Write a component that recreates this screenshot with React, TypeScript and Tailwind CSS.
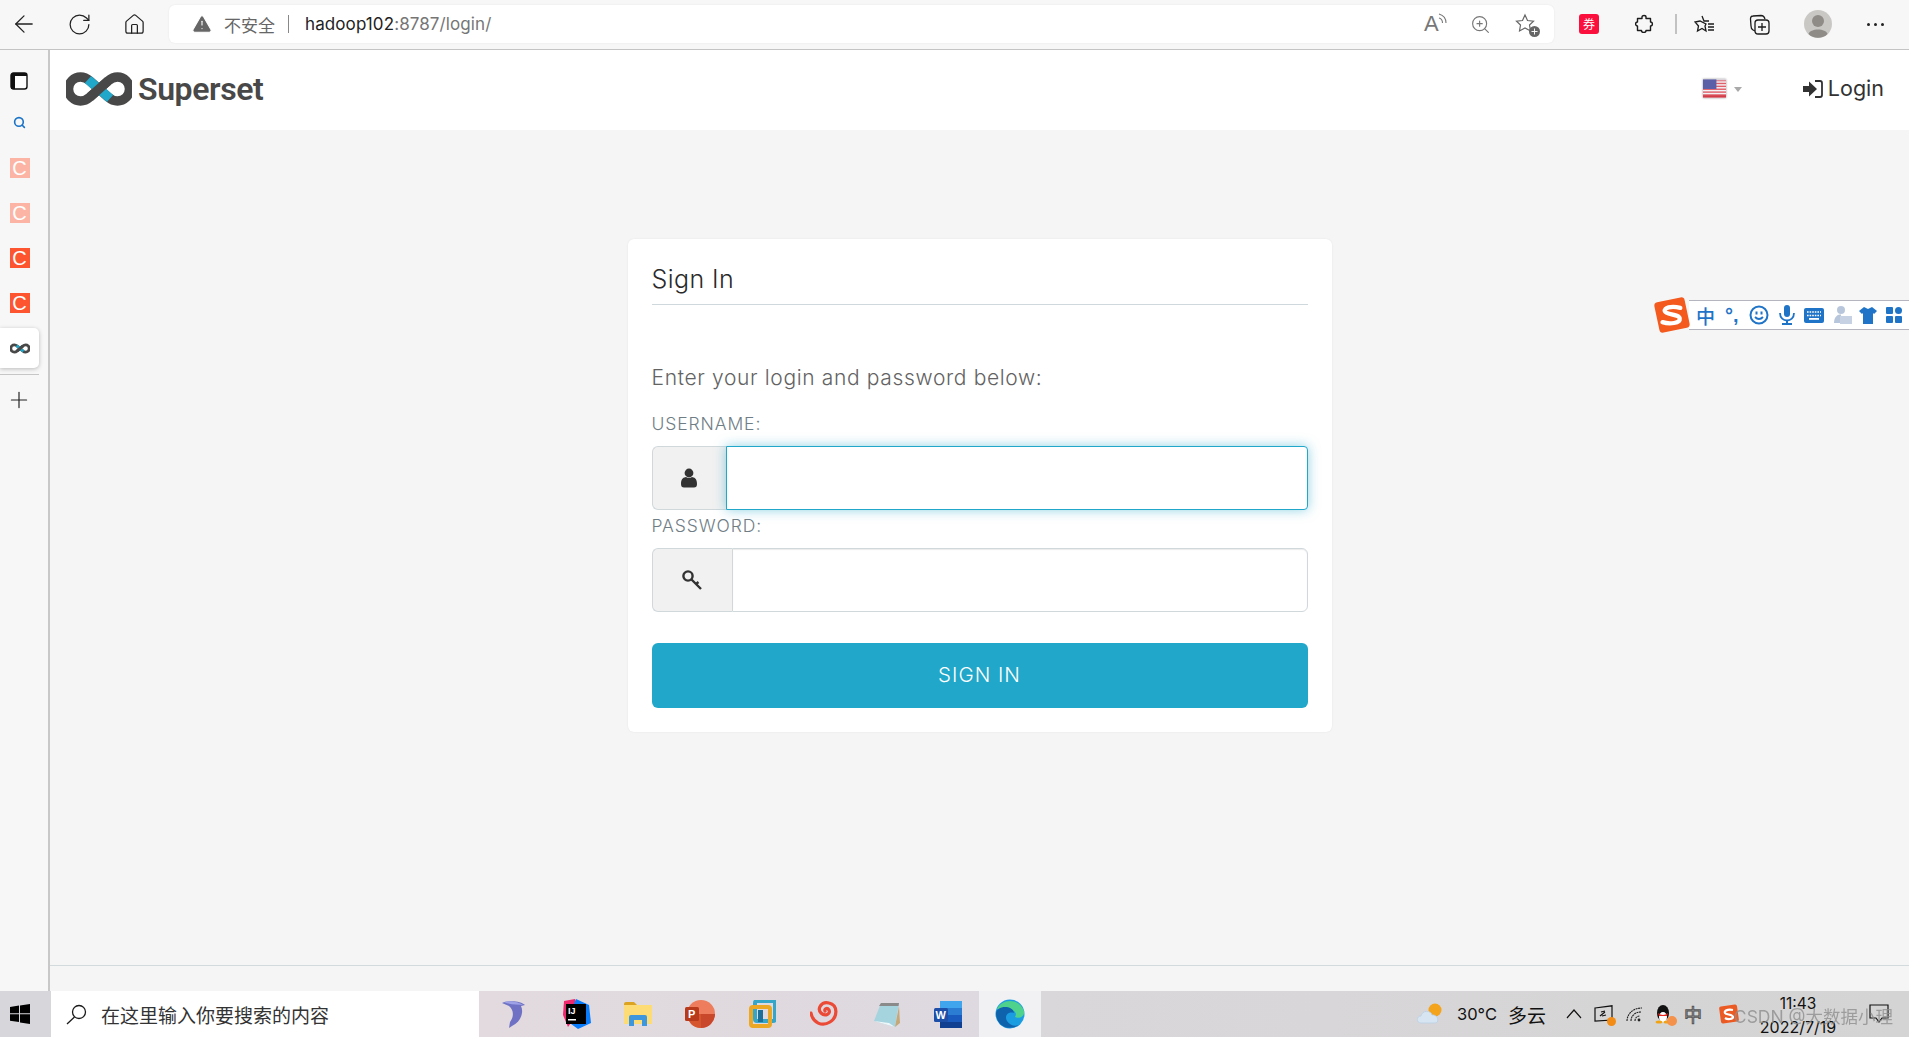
import React from "react";
import { ArrowLeft, RotateCw, Home, TriangleAlert, ZoomIn, Plus, Search } from "lucide-react";

const inter = "font-['Inter','Noto_Sans_CJK_SC',sans-serif]";
const cjk = "font-['Noto_Sans_CJK_SC','Liberation_Sans',sans-serif]";

function Logo({ w = 66, h = 34 }: { w?: number; h?: number }) {
  return (
    <svg width={w} height={h} viewBox="0 0 66 34" fill="none">
      <path d="M33 17 L24 9 C20 5.5 17 5 14.5 5 A12 12 0 0 0 14.5 29 C17 29 20 28.5 24 25 L42 9 C46 5.5 49 5 51.5 5 A12 12 0 0 1 51.5 29 C49 29 46 28.5 42 25 Z" stroke="#484848" strokeWidth="9.5" />
      <path d="M22 7.5 L31 15.5 M35 18.5 L44 26.5" stroke="#20a7c9" strokeWidth="9.5" />
      <path d="M24 25 L42 9" stroke="#484848" strokeWidth="9.5" />
    </svg>
  );
}

function CTile({ faded }: { faded?: boolean }) {
  return (
    <div className={`w-5 h-5 flex items-center justify-center text-white text-[20px] leading-none font-['Liberation_Sans',sans-serif] ${faded ? "bg-[#fcb5a5]" : "bg-[#fc5530]"}`}>C</div>
  );
}

function Flag() {
  return (
    <svg width="23" height="19" viewBox="0 0 24 19" className="drop-shadow-[0_0_1px_rgba(0,0,0,0.4)]">
      <rect width="24" height="19" fill="#f3f3f6" />
      {[0, 3, 6, 9, 12, 15].map((y) => (<rect key={y} y={y + 0.5} width="24" height="1.5" fill="#e0606a" />))}
      <rect width="24" height="1" fill="#d8d8e0" />
      <rect y="16.5" width="24" height="2.5" fill="#d33c48" />
      <rect width="14" height="10" fill="#5b5fa8" />
    </svg>
  );
}

function PuzzleIcon() {
  return (
    <svg width="20" height="20" viewBox="0 0 20 20" fill="none" stroke="#1c1c1c" strokeWidth="1.4" strokeLinejoin="round">
      <path d="M8 3 C8 1 12 1 12 3 L12 4.5 L16.5 4.5 L16.5 8 C19 8 19 12 16.5 12 L16.5 16.5 L12 16.5 C12 19 7.5 19 7.5 16.5 L3.5 16.5 L3.5 12 C1 12 1 8 3.5 8 L3.5 4.5 L8 4.5 Z" />
    </svg>
  );
}

function SogouS({ size = 32 }: { size?: number }) {
  return (
    <svg width={size} height={size} viewBox="0 0 32 32">
      <rect x="3" y="3" width="26" height="26" rx="3" fill="#f4591e" transform="rotate(-12 16 16)" />
      <path d="M23 10 C15 8 9 10 10 13 C11 16 22 15 22.5 19 C23 23 14 24 8 22" fill="none" stroke="#fff" strokeWidth="3.6" strokeLinecap="round" />
    </svg>
  );
}

function ImeBar() {
  const c = "#1f74c8";
  return (
    <div className="absolute right-0 top-[298px] h-[34px] flex items-center">
      <div className="relative z-10 -mr-[2px]"><SogouS size={38} /></div>
      <div className="h-[30px] bg-white border-y border-[#b5b5c0] flex items-center pl-[7px] w-[220px]">
        <span className={`text-[19px] font-medium leading-none text-[#1f74c8] w-[20px] ${cjk}`}>中</span>
        <span className="ml-[9px] w-[20px] text-[20px] font-bold leading-none text-[#1f74c8] font-['Liberation_Sans',sans-serif]">°,</span>
        <svg className="ml-[4px]" width="20" height="20" viewBox="0 0 20 20" fill="none" stroke={c} strokeWidth="2"><circle cx="10" cy="10" r="8.5" /><path d="M6 12 Q10 16 14 12" /><path d="M7.5 6.5v3M12.5 6.5v3" /></svg>
        <svg className="ml-[10px]" width="16" height="20" viewBox="0 0 16 20" fill={c}><rect x="5" y="0" width="6" height="12" rx="3" /><path d="M1 8 C1 18 15 18 15 8" fill="none" stroke={c} strokeWidth="1.8" /><rect x="7" y="15" width="2" height="3" /><rect x="3" y="18" width="10" height="2" /></svg>
        <svg className="ml-[9px]" width="20" height="15" viewBox="0 0 20 15" fill={c}><rect width="20" height="15" rx="2" /><path d="M3 4h14M3 7.5h14" stroke="#fff" strokeWidth="1.6" strokeDasharray="1.6 1" /><rect x="5" y="10" width="10" height="1.8" fill="#fff" /></svg>
        <svg className="ml-[8px]" width="20" height="20" viewBox="0 0 20 20" fill="#b8c6dc"><circle cx="9" cy="5" r="4" /><path d="M2 18 C2 11 6 9.5 9 9.5 L9 18 Z" /><rect x="8" y="11" width="12" height="8" fill="#c6d2e4" /></svg>
        <svg className="ml-[7px]" width="18" height="18" viewBox="0 0 18 18" fill={c}><path d="M5 1 L9 3 L13 1 L18 5 L15 8 L14 7 L14 18 L4 18 L4 7 L3 8 L0 5 Z" /></svg>
        <svg className="ml-[9px]" width="16" height="16" viewBox="0 0 16 16" fill={c}><rect width="7" height="7" rx="1" /><rect x="9" width="7" height="7" rx="3.5" /><rect y="9" width="7" height="7" rx="1" /><rect x="9" y="9" width="7" height="7" rx="1" /></svg>
      </div>
    </div>
  );
}

function BrowserBar() {
  return (
    <div className="h-[50px] shrink-0 flex items-center bg-[#f7f7f7] border-b border-[#c4c4c4] pb-[1px]">
      <div className="w-[169px] shrink-0 flex items-center pl-[10px] text-[#222]">
        <ArrowLeft size={28} strokeWidth={1.1} />
        <RotateCw className="ml-[29px]" size={25} strokeWidth={1.2} />
        <Home className="ml-[31px]" size={23} strokeWidth={1.3} />
      </div>
      <div className="w-[1385px] h-[38px] bg-white rounded-[6px] shadow-[0_0_2px_rgba(0,0,0,0.08)] flex items-center pl-[22px] pr-[17px]">
        <TriangleAlert size={22} fill="#666" stroke="#fff" strokeWidth={1.2} />
        <span className={`ml-[11px] text-[17px] text-[#666] leading-none ${cjk}`}>不安全</span>
        <span className="mx-[13px] w-[1px] h-[18px] bg-[#888]" />
        <span className={`ml-[3px] mt-[2px] text-[17px] tracking-[0.1px] text-[#222] ${inter}`}>hadoop102<span className="text-[#767676]">:8787/login/</span></span>
        <div className="ml-auto flex items-center gap-[24px] text-[#777]">
          <span className="relative w-[22px] h-[22px] text-[22px] leading-none font-['Liberation_Sans',sans-serif] font-light">A
            <svg className="absolute -right-[2px] top-0" width="10" height="12" viewBox="0 0 10 12" fill="none" stroke="#777" strokeWidth="1.1"><path d="M1 1 Q8 3 8 10M1 5 Q4.5 6 4.5 10" /></svg>
          </span>
          <ZoomIn size={21} strokeWidth={1.3} />
          <span className="relative w-[22px] h-[22px]">
            <svg width="22" height="22" viewBox="0 0 22 22" fill="none" stroke="#666" strokeWidth="1.2"><path d="M10 2 L12.5 7.5 L18.5 8.2 L14.5 12 L15.5 18 L10 15 L4.5 18 L5.5 12 L1.5 8.2 L7.5 7.5 Z" /></svg>
            <span className="absolute right-[-3px] bottom-[-2px] w-[11px] h-[11px] rounded-full bg-[#666] flex items-center justify-center"><Plus size={9} color="#fff" strokeWidth={2.5} /></span>
          </span>
        </div>
      </div>
      <div className="flex-1 relative flex items-center pl-[25px] text-[#1c1c1c]">
        <div className={`w-5 h-5 rounded-[3px] bg-[#fb0f3c] text-white text-[12px] leading-none flex items-center justify-center ${cjk}`}>券</div>
        <div className="ml-[35px]"><PuzzleIcon /></div>
        <span className="ml-[21px] w-[2px] h-[20px] bg-[#c2c2c2]" />
        <svg className="ml-[17px]" width="21" height="20" viewBox="0 0 21 20" fill="none" stroke="#1c1c1c" strokeWidth="1.3"><path d="M8 2 L10 7 L15 7 M12 10 L11 12 L12 17 L8 14.5 L3.5 17 L4.5 12 L1 8 L6 7 Z" /><path d="M14 10h6M14 13h6M14 16h6" /></svg>
        <svg className="ml-[34px]" width="21" height="21" viewBox="0 0 21 21" fill="none" stroke="#1c1c1c" strokeWidth="1.3"><path d="M6 17 L4 16 Q2 15 2 12 L1.5 5 Q1.5 2 4 2 L12 1.5 Q15 1.5 16 5" /><rect x="6" y="6" width="14" height="14" rx="3" /><path d="M13 9v8M9 13h8" /></svg>
        <svg className="ml-[34px]" width="28" height="28" viewBox="0 0 28 28"><circle cx="14" cy="14" r="14" fill="#c9c8c5" /><circle cx="14" cy="11" r="6" fill="#8f8b87" /><path d="M4.5 24 C6 18 22 18 23.5 24 C19 29 9 29 4.5 24 Z" fill="#8f8b87" /></svg>
        <span className="ml-[35px] flex gap-[4px]"><span className="w-[3px] h-[3px] rounded-full bg-[#222]" /><span className="w-[3px] h-[3px] rounded-full bg-[#222]" /><span className="w-[3px] h-[3px] rounded-full bg-[#222]" /></span>
      </div>
    </div>
  );
}

function Sidebar() {
  return (
    <div className="w-[50px] shrink-0 bg-[#f7f7f7] border-r-2 border-[#c8c8c8] flex flex-col items-center pr-[9px] pt-[22px]">
      <svg width="18" height="18" viewBox="0 0 18 18" className="ml-[-2px]">
        <rect x="1" y="1" width="16" height="16" rx="2.5" fill="#fff" stroke="#111" strokeWidth="1.4" />
        <path d="M1 3.5 Q1 1 3.5 1 H14.5 Q17 1 17 3.5 V4 H1 Z" fill="#111" />
        <rect x="1" y="4" width="4" height="13" fill="#111" />
      </svg>
      <Search size={13} strokeWidth={3} color="#1a73c8" className="mt-[26px]" />
      <div className="mt-[29px]"><CTile faded /></div>
      <div className="mt-[25px]"><CTile faded /></div>
      <div className="mt-[25px]"><CTile /></div>
      <div className="mt-[25px]"><CTile /></div>
      <div className="mt-[15px] w-[39px] h-[40px] bg-white rounded-r-[5px] shadow-[0_1px_4px_rgba(0,0,0,0.25)] flex items-center justify-center"><Logo w={20} h={11} /></div>
      <div className="mt-[6px] w-[39px] h-[1px] bg-[#c6c6c6]" />
      <Plus size={26} strokeWidth={1.1} color="#222" className="mt-[12px] ml-[-2px]" />
    </div>
  );
}

function Header() {
  return (
    <div className="h-[80px] shrink-0 bg-white flex items-center pl-[16px] pr-[25px] pb-[3px]">
      <Logo />
      <span className="ml-[6px] text-[32px] font-semibold tracking-[-0.4px] text-[#484848] font-['Roboto',sans-serif]">Superset</span>
      <div className="ml-auto flex items-center">
        <Flag />
        <span className="ml-[8px] mt-[2px] w-0 h-0 border-x-[4px] border-x-transparent border-t-[5px] border-t-[#a9a9a9]" />
        <svg className="ml-[61px]" width="20" height="18" viewBox="0 0 20 18" fill="#323232">
          <path d="M0 6 H6 V1.5 L14 9 L6 16.5 V12 H0 Z" />
          <path d="M12 1 H17 Q19 1 19 3 V15 Q19 17 17 17 H12" fill="none" stroke="#323232" strokeWidth="1.8" />
        </svg>
        <span className={`ml-[5px] text-[21.5px] text-[#323232] ${inter}`}>Login</span>
      </div>
    </div>
  );
}

function Field({ label, addonW, focus, icon }: { label: string; addonW: string; focus?: boolean; icon: React.ReactNode }) {
  return (
    <div>
      <div className={`text-[17.5px] tracking-[0.9px] leading-[22px] font-light text-[#6f7d85] ${inter}`}>{label}</div>
      <div className="mt-[11px] h-[64px] flex relative">
        <div className={`${addonW} shrink-0 bg-[#f1f1f1] border border-[#d0d8dc] border-r-0 rounded-l-[6px] flex items-center justify-center text-[#323232]`}>{icon}</div>
        {focus ? (
          <input className="flex-1 min-w-0 bg-white border border-[#20a7c9] rounded-r-[4px] outline-none shadow-[0_0_12px_rgba(32,167,201,0.5)]" aria-label={label} />
        ) : (
          <input className="flex-1 min-w-0 bg-white border border-[#d0d8dc] rounded-r-[6px] outline-none shadow-[inset_0_1px_1px_rgba(0,0,0,0.08)]" aria-label={label} />
        )}
      </div>
    </div>
  );
}

function Card() {
  return (
    <div className="mx-auto mt-[109px] w-[704px] h-[493px] bg-white rounded-[6px] shadow-[0_0_2px_rgba(0,0,0,0.08)] px-[24px]">
      <div className={`h-[66px] border-b border-[#cfd8dc] pt-[22px] text-[25px] tracking-[0.4px] leading-[36px] font-light text-[#2a2a2a] ${inter}`}>Sign In</div>
      <div className={`mt-[59px] text-[21px] tracking-[0.65px] leading-[28px] font-light text-[#636363] ${inter}`}>Enter your login and password below:</div>
      <div className="mt-[21px]"><Field label="USERNAME:" addonW="w-[74px]" focus icon={<svg width="16" height="20" viewBox="0 0 16 20" fill="#323232"><circle cx="8" cy="5" r="4.4" /><path d="M0 16 C0 10 3 9.5 5 9 Q8 11 11 9 C13 9.5 16 10 16 16 Q16 19.5 13 19.5 L3 19.5 Q0 19.5 0 16 Z" /></svg>} /></div>
      <div className="mt-[5px]"><Field label="PASSWORD:" addonW="w-[80px]" icon={<svg width="22" height="22" viewBox="0 0 22 22" fill="none" stroke="#323232" strokeWidth="2.4"><circle cx="7" cy="7" r="4.6" /><path d="M10.5 10.5 L20 20 M15 15 L17.5 13" /></svg>} /></div>
      <button className={`mt-[31px] w-full h-[65px] rounded-[6px] bg-[#20a7c9] text-white text-[20.5px] tracking-[1px] font-light ${inter}`}>SIGN IN</button>
    </div>
  );
}

function DolphinIcon() {
  return (
    <svg width="26" height="28" viewBox="0 0 26 28"><path d="M1 3 C8 0 20 1 24 5 L20 6 C23 12 20 22 11 26 L8 28 L9 22 C13 17 13 10 8 6 Z" fill="#6f72c4" /><path d="M3 2 C9 0 18 2 22 5 C16 4 9 5 3 2 Z" fill="#9ea1e6" /></svg>
  );
}
function IdeaIcon() {
  return (
    <svg width="30" height="30" viewBox="0 0 30 30">
      <path d="M3 2 L14 0 L17 14 L7 28 L2 16 Z" fill="#f0286e" />
      <path d="M15 0 L28 6 L30 24 L17 30 L6 22 Z" fill="#087cfa" />
      <rect x="5" y="5" width="20" height="20" fill="#000" />
      <text x="7" y="15" fontSize="9" fontWeight="700" fill="#fff" fontFamily="Liberation Sans">IJ</text>
      <rect x="7" y="20" width="8" height="1.5" fill="#fff" />
    </svg>
  );
}
function FolderIcon() {
  return (
    <svg width="28" height="24" viewBox="0 0 28 24"><path d="M0 2 Q0 0 2 0 H10 L13 3 H0 Z" fill="#dca320" /><rect y="3" width="28" height="19" fill="#fddc75" /><path d="M5 24 V15 Q5 13 7 13 H21 Q23 13 23 15 V24 H18 V18 H10 V24 Z" fill="#3e97dc" /></svg>
  );
}
function PptIcon() {
  return (
    <svg width="30" height="28" viewBox="0 0 30 28"><circle cx="16" cy="14" r="14" fill="#ed7d5c" /><path d="M16 14 H30 A14 14 0 0 1 16 28 Z" fill="#c9472b" /><path d="M16 14 V28 A14 14 0 0 1 2 14 Z" fill="#d6552f" /><rect x="0" y="7" width="14" height="14" rx="1.5" fill="#b83a1c" /><text x="3" y="18" fontSize="11" fontWeight="700" fill="#fff" fontFamily="Liberation Sans">P</text></svg>
  );
}
function VmIcon() {
  return (
    <svg width="27" height="28" viewBox="0 0 27 28" fill="none"><rect x="6" y="1" width="20" height="20" rx="2" stroke="#35a6c8" strokeWidth="4" /><rect x="2" y="7" width="19" height="19" rx="2" stroke="#eca724" strokeWidth="4" /><rect x="9" y="10" width="5" height="12" fill="#1d6f9a" /></svg>
  );
}
function SpiralIcon() {
  return (
    <svg width="28" height="26" viewBox="0 0 28 26" fill="none"><path d="M1 12 C3 22 12 26 20 21 C28 16 28 4 19 2 C11 0 7 8 11 12 C15 16 21 13 19 9 C17 6 14 8 15 10" stroke="#ea4a36" strokeWidth="3.2" strokeLinecap="round" /></svg>
  );
}
function NotepadIcon() {
  return (
    <svg width="27" height="27" viewBox="0 0 27 27"><path d="M8 2 L26 2 L22 26 L1 20 Z" fill="#a5d3de" /><path d="M8 2 L26 2 L25.5 5 L6 5 Z" fill="#8a8a8a" /><path d="M22 26 L26 5 L27 22 Z" fill="#c4a878" /><path d="M1 20 L22 26 L16 22 Z" fill="#eef6f8" /></svg>
  );
}
function WordIcon() {
  return (
    <svg width="28" height="27" viewBox="0 0 28 27"><rect x="6" y="0" width="22" height="27" rx="1" fill="#2b7cd3" /><rect x="6" y="0" width="22" height="7" fill="#41a5ee" /><rect x="6" y="14" width="22" height="7" fill="#185abd" /><rect x="6" y="21" width="22" height="6" fill="#103f91" /><rect x="0" y="7" width="14" height="14" rx="1.5" fill="#1e4fa8" /><text x="1.5" y="18" fontSize="11" fontWeight="700" fill="#fff" fontFamily="Liberation Sans">W</text></svg>
  );
}
function EdgeIcon() {
  return (
    <svg width="30" height="30" viewBox="0 0 30 30">
      <circle cx="15" cy="15" r="14.5" fill="#1b9de2" />
      <path d="M2 10 C6 0 24 -2 29 12 C30 18 24 20 20 18 C24 12 14 8 8 12 Z" fill="#4fd28b" />
      <path d="M1 15 C1 6 18 6 19 14 C13 12 9 17 12 22 C15 27 22 28 25 25 C18 32 2 30 1 15 Z" fill="#0f63ad" />
    </svg>
  );
}

function Taskbar() {
  const slot = "w-[62px] flex items-center justify-center";
  return (
    <div className="h-[46px] shrink-0 flex items-center bg-[#d8d8d8] relative">
      <div className="w-[51px] h-full bg-[#d6d6db] flex items-center pl-[10px]">
        <svg width="20" height="20" viewBox="0 0 20 20" fill="#000"><path d="M0 3 L9 1.6 V9.3 H0 Z M10 1.4 L20 0 V9.3 H10 Z M0 10.3 H9 V18 L0 16.8 Z M10 10.3 H20 V20 L10 18.4 Z" /></svg>
      </div>
      <div className="w-[428px] h-full bg-white flex items-center pl-[15px]">
        <svg width="21" height="21" viewBox="0 0 21 21" fill="none" stroke="#1a1a1a" strokeWidth="1.3"><circle cx="13" cy="8" r="6.5" /><path d="M8.5 13 L1 20" /></svg>
        <span className={`ml-[14px] text-[19px] leading-none text-[#333] ${cjk}`}>在这里输入你要搜索的内容</span>
      </div>
      <div className="h-full w-[562px] flex items-center bg-gradient-to-r from-[#e2dade] to-[#ddd9e0] pl-[4px]">
        <div className={slot}><DolphinIcon /></div>
        <div className={slot}><IdeaIcon /></div>
        <div className={slot}><FolderIcon /></div>
        <div className={slot}><PptIcon /></div>
        <div className={slot}><VmIcon /></div>
        <div className={slot}><SpiralIcon /></div>
        <div className={slot}><NotepadIcon /></div>
        <div className={slot}><WordIcon /></div>
        <div className={`${slot} h-full bg-[#f1f0f3]`}><EdgeIcon /></div>
      </div>
      <div className="flex-1 h-full flex items-center bg-gradient-to-r from-[#dad7da] to-[#d4d4d4] relative">
        <svg className="ml-[376px]" width="26" height="22" viewBox="0 0 26 22"><circle cx="18" cy="7" r="6.5" fill="#f3a31c" /><path d="M4 20 C-1 20 -1 13 4 13 C5 7 14 7 15 12 C21 11 23 20 18 20 Z" fill="#d7e5f2" stroke="#b9cfe4" strokeWidth="0.8" /></svg>
        <span className={`ml-[14px] text-[16.5px] leading-none text-[#111] ${inter}`}>30°C</span>
        <span className={`ml-[11px] text-[19px] leading-none text-[#111] ${cjk}`}>多云</span>
        <svg className="ml-[20px]" width="16" height="10" viewBox="0 0 16 10" fill="none" stroke="#111" strokeWidth="1.2"><path d="M1 9 L8 1 L15 9" /></svg>
        <span className="ml-[12px] relative">
          <svg width="19" height="18" viewBox="0 0 19 18" fill="none" stroke="#111" strokeWidth="1.2"><path d="M1 3 L18 0.8 V15 L1 16 Z" /><path d="M7 7 L11 6 M6 11 L11 7 M12 10 L8 11" /></svg>
          <span className="absolute right-[-3px] bottom-[-3px] w-[9px] h-[9px] rounded-full bg-[#f28c14]" />
        </span>
        <svg className="ml-[13px]" width="17" height="15" viewBox="0 0 17 15" fill="none" stroke="#222" strokeWidth="1.1"><path d="M1 14 C1 7 7 1 16 1 M5 14 C5 9 9 5 15 5 M9 14 C9 11 11 9 14 9" strokeDasharray="2 0.6" /><circle cx="13" cy="13" r="1.4" fill="#222" stroke="none" /></svg>
        <span className="ml-[12px] relative">
          <svg width="16" height="20" viewBox="0 0 16 20"><ellipse cx="8" cy="9" rx="6" ry="8" fill="#111" /><ellipse cx="8" cy="13" rx="4" ry="5" fill="#fff" /><path d="M3 9 Q8 13 13 9 L12 12 L4 12 Z" fill="#e8281c" /><ellipse cx="4" cy="18" rx="3.4" ry="1.6" fill="#f1a413" /><ellipse cx="12" cy="18" rx="3.4" ry="1.6" fill="#f1a413" /></svg>
          <span className="absolute right-[-6px] bottom-[-2px] w-[10px] h-[10px] rounded-full bg-[#f4914a]" />
        </span>
        <span className={`ml-[13px] text-[18px] leading-none text-[#d8d8d8] [-webkit-text-stroke:1px_#555] ${cjk}`}>中</span>
        <span className="ml-[17px]">
          <svg width="20" height="20" viewBox="0 0 20 20"><rect x="1" y="1.5" width="18" height="17" rx="2" fill="#ec5a24" transform="rotate(-8 10 10)" /><path d="M14 6 C8 5 5 7 6 9 C7 11 14 10 14 13 C14 15 9 16 6 14" fill="none" stroke="#fff" strokeWidth="2.2" /></svg>
        </span>
        <div className={`ml-[22px] mt-[3px] w-[74px] flex flex-col items-center text-[#111] ${inter}`}>
          <span className="text-[15.5px] leading-[19px]">11:43</span>
          <span className="text-[16px] leading-[19px] mt-[5px] whitespace-nowrap">2022/7/19</span>
        </div>
        <svg className="ml-[34px]" width="20" height="20" viewBox="0 0 20 20" fill="none" stroke="#111" strokeWidth="1.2"><path d="M1 1 H19 V14 H13 L10 18 L7 14 H1 Z" /></svg>
      </div>
      <span className={`absolute right-[16px] top-[17px] text-[17.5px] leading-none text-[#8f8f8f] opacity-80 whitespace-nowrap ${inter}`}>CSDN @大数据小理</span>
    </div>
  );
}

export default function App() {
  return (
    <div className="relative w-[1909px] h-[1037px] overflow-hidden flex flex-col bg-[#f5f5f5]">
      <BrowserBar />
      <div className="flex-1 min-h-0 flex">
        <Sidebar />
        <div className="flex-1 min-w-0 flex flex-col bg-[#f5f5f5]">
          <Header />
          <div className="flex-1 min-h-0"><Card /></div>
          <div className="h-[26px] shrink-0 border-t border-[#d3dadd]" />
        </div>
      </div>
      <Taskbar />
      <ImeBar />
    </div>
  );
}
